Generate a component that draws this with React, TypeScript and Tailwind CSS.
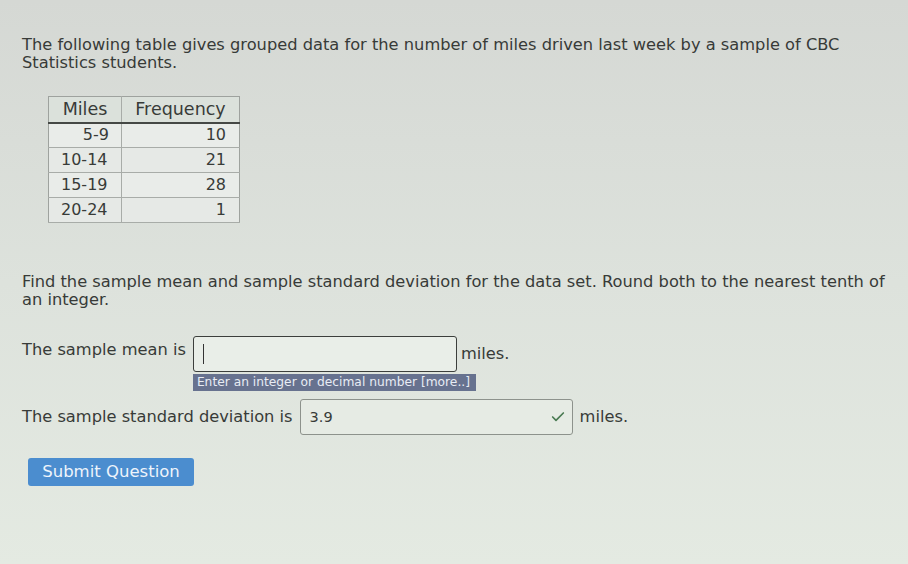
import { Check } from 'lucide-react'

const rows = [
  ['5-9', '10'],
  ['10-14', '21'],
  ['15-19', '28'],
  ['20-24', '1'],
]

export default function App() {
  return (
    <div className="w-[908px] h-[564px] overflow-hidden bg-gradient-to-b from-[#d5d8d4] via-[#dde2dc] to-[#e4eae2] text-[#383b38] text-[16.25px] leading-[18px] font-['DejaVu_Sans',sans-serif]">
      <div className="pl-[22px] pt-[36px] pr-[10px]">
        <p className="whitespace-nowrap">
          The following table gives grouped data for the number of miles driven last week by a sample of CBC
          <br />
          Statistics students.
        </p>

        <table className="mt-[24px] ml-[26px] border-collapse border border-[#9ea29e] text-[16px]">
          <thead>
            <tr className="bg-[#dbe1db]">
              <th className="w-[73px] h-[26px] px-1 font-normal text-[17.5px] text-center border-r border-[#a8aca8] border-b-2 border-b-[#454845]">
                Miles
              </th>
              <th className="w-[118px] px-1 font-normal text-[17.5px] text-center border-b-2 border-b-[#454845]">
                Frequency
              </th>
            </tr>
          </thead>
          <tbody>
            {rows.map(([m, f], i) => (
              <tr key={m} className={i % 2 ? 'bg-[#e6e9e6]' : 'bg-[#e9ece9]'}>
                <td
                  className={`h-[25px] border-r border-b border-[#a8aca8] ${
                    i === 0 ? 'text-right pr-[12px]' : 'text-left pl-[12px]'
                  }`}
                >
                  {m}
                </td>
                <td className="border-b border-[#a8aca8] text-right pr-[13px]">{f}</td>
              </tr>
            ))}
          </tbody>
        </table>

        <p className="mt-[50px] whitespace-nowrap">
          Find the sample mean and sample standard deviation for the data set. Round both to the nearest tenth of
          <br />
          an integer.
        </p>

        <div className="mt-[27px] flex items-start">
          <span className="mt-[5px]">The sample mean is</span>
          <div className="ml-[7px] flex flex-col">
            <div className="flex items-center">
              <div className="w-[264px] h-[36px] rounded-[3px] border border-[#3c3f3c] bg-[#e9eee8] flex items-center pl-[9px]">
                <span className="w-px h-[20px] bg-[#333]" />
              </div>
              <span className="ml-[4px]">miles.</span>
            </div>
            <div className="mt-[2px] w-[283px] h-[17px] bg-[#67728f] text-[#e8ecf4] text-[12.25px] leading-[17px] pl-[4px] whitespace-nowrap">
              Enter an integer or decimal number [more..]
            </div>
          </div>
        </div>

        <div className="mt-[8px] flex items-center">
          <span>The sample standard deviation is</span>
          <div className="ml-[7px] w-[273px] h-[36px] rounded-[3px] border border-[#8d928c] bg-[#e6ebe4] flex items-center justify-between pl-[9px] pr-[6px]">
            <span className="text-[14.5px]">3.9</span>
            <Check size={16} strokeWidth={2.5} className="text-[#4a7a52]" />
          </div>
          <span className="ml-[7px]">miles.</span>
        </div>

        <button className="mt-[23px] ml-[6px] w-[166px] h-[28px] rounded-[3px] bg-[#4b8dcf] text-[#eef4fb] text-[16.5px] font-['DejaVu_Sans',sans-serif]">
          Submit Question
        </button>
      </div>
    </div>
  )
}
